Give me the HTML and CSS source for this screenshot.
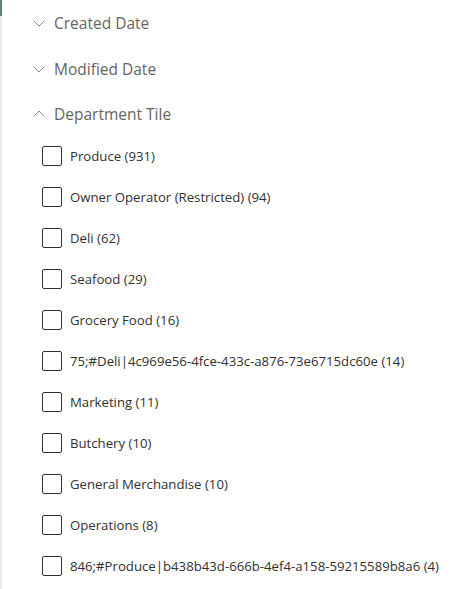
FILE: index.html
```html
<!DOCTYPE html>
<html>
<head>
<meta charset="utf-8">
<link rel="stylesheet" href="styles.css">
</head>
<body>
<div class="panel">
  <div class="group">
    <div class="header">
      <svg class="chev" width="12" height="7" viewBox="0 0 12 7"><path d="M0.5 0.5 L6 6 L11.5 0.5" fill="none" stroke="#8a8886" stroke-width="1"/></svg>
      <span class="htext">Created Date</span>
    </div>
  </div>
  <div class="group">
    <div class="header">
      <svg class="chev" width="12" height="7" viewBox="0 0 12 7"><path d="M0.5 0.5 L6 6 L11.5 0.5" fill="none" stroke="#8a8886" stroke-width="1"/></svg>
      <span class="htext">Modified Date</span>
    </div>
  </div>
  <div class="group">
    <div class="header open">
      <svg class="chev" width="12" height="7" viewBox="0 0 12 7"><path d="M0.5 6.5 L6 1 L11.5 6.5" fill="none" stroke="#8a8886" stroke-width="1"/></svg>
      <span class="htext">Department Tile</span>
    </div>
    <ul class="items">
      <li class="item"><span class="box"></span><span class="label">Produce (931)</span></li>
      <li class="item"><span class="box"></span><span class="label">Owner Operator (Restricted) (94)</span></li>
      <li class="item"><span class="box"></span><span class="label">Deli (62)</span></li>
      <li class="item"><span class="box"></span><span class="label">Seafood (29)</span></li>
      <li class="item"><span class="box"></span><span class="label">Grocery Food (16)</span></li>
      <li class="item"><span class="box"></span><span class="label">75;#Deli|4c969e56-4fce-433c-a876-73e6715dc60e (14)</span></li>
      <li class="item"><span class="box"></span><span class="label">Marketing (11)</span></li>
      <li class="item"><span class="box"></span><span class="label">Butchery (10)</span></li>
      <li class="item"><span class="box"></span><span class="label">General Merchandise (10)</span></li>
      <li class="item"><span class="box"></span><span class="label">Operations (8)</span></li>
      <li class="item"><span class="box"></span><span class="label">846;#Produce|b438b43d-666b-4ef4-a158-59215589b8a6 (4)</span></li>
    </ul>
  </div>
</div>
</body>
</html>
```
FILE: styles.css
```css
html, body {
  margin: 0;
  padding: 0;
  background: #ffffff;
}
body {
  font-family: "Open Sans", "Noto Sans", sans-serif;
  width: 470px;
  height: 589px;
  overflow: hidden;
}
.panel {
  height: 589px;
  border-left: 2px solid #ebebeb;
  position: relative;
  box-sizing: border-box;
}
.panel::before {
  content: "";
  position: absolute;
  left: -2px;
  top: 0;
  width: 2px;
  height: 16px;
  background: #5e7f7c;
}
.header {
  height: 46px;
  display: flex;
  align-items: center;
  padding-left: 31px;
  gap: 9px;
}
.header.open {
  height: 43px;
}
.chev {
  display: block;
  flex: none;
}
.htext {
  font-size: 15.5px;
  color: #66645f;
  line-height: 20px;
}
.items {
  list-style: none;
  margin: 0;
  padding: 0;
}
.item {
  height: 41px;
  display: flex;
  align-items: center;
  padding-left: 40px;
  gap: 8px;
}
.box {
  width: 18px;
  height: 18px;
  border: 1px solid #323130;
  border-radius: 2px;
  flex: none;
}
.label {
  font-size: 13.2px;
  color: #323130;
  line-height: 18px;
}
```
